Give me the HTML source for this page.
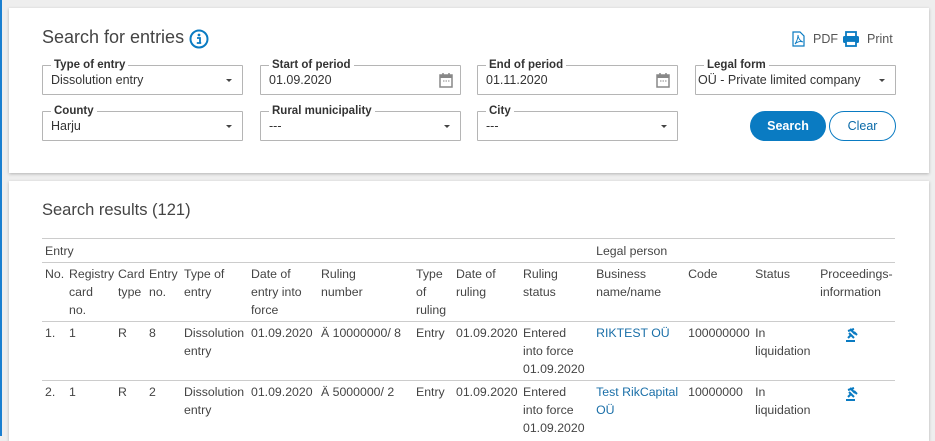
<!DOCTYPE html>
<html><head><meta charset="utf-8"><style>
*{box-sizing:border-box;margin:0;padding:0}
body{width:935px;height:436px;overflow:hidden;background:#eeeeee;font-family:"Liberation Sans",sans-serif;color:#444;position:relative}
.lb{position:absolute;left:0;top:0;width:2px;height:436px;background:#1a7fd0}
.card{position:absolute;background:#fff;box-shadow:0 1px 3px rgba(0,0,0,.25)}
.abs{position:absolute}
.f{position:absolute;height:30px;border:1px solid #b5b5b5;border-radius:1px}
.f .l{position:absolute;left:8px;top:-8px;background:#fff;padding:0 3px;font-size:11.5px;font-weight:bold;color:#333;line-height:14px}
.f .v{position:absolute;left:8px;top:7px;font-size:12.5px;color:#333}
.f .ar{position:absolute;right:10px;top:13px;border-left:3.5px solid transparent;border-right:3.5px solid transparent;border-top:3.5px solid #444}
.f .cal{position:absolute;right:7px;top:6px}
table{position:absolute;left:42px;top:238px;width:853px;border-collapse:collapse;font-size:12.3px;color:#444;table-layout:fixed}
td{vertical-align:top;line-height:18px;padding:1px 2px 1px 3px;white-space:nowrap;overflow:visible}
tr.g td{border-top:1px solid #ccc;padding-top:3px;padding-bottom:2px}
tr.h td{border-top:1px solid #ccc;padding-top:2px;padding-bottom:2px}
tr.r td{border-top:1px solid #ccc;padding-top:2px;padding-bottom:2px}
a{color:#1a6fa8;text-decoration:none}
</style></head><body>
<div class="lb"></div>
<div class="card" style="left:9px;top:8px;width:920px;height:165px"></div>
<div class="card" style="left:9px;top:181px;width:920px;height:260px"></div>

<div class="abs" style="left:42px;top:27px;font-size:18px;color:#444">Search for entries</div>
<svg class="abs" style="left:189px;top:29px" width="20" height="20" viewBox="0 0 20 20"><circle cx="10" cy="10" r="8.5" fill="none" stroke="#0a7bc2" stroke-width="2"/><circle cx="10" cy="6" r="1.4" fill="#0a7bc2"/><path d="M8 9h3v5h1.2M7.8 14h4.4" stroke="#0a7bc2" stroke-width="1.8" fill="none"/></svg>

<svg class="abs" style="left:792px;top:31px" width="13" height="16" viewBox="0 0 13 16"><path d="M1 1h7l4 4v10H1z" fill="none" stroke="#0a7bc2" stroke-width="1.2"/><path d="M3 13c2-3 3-6 3-9 0 3 2 6 5 7-3-1-6 0-8 2z" fill="none" stroke="#0a7bc2" stroke-width=".9"/></svg>
<div class="abs" style="left:813px;top:32px;font-size:12.5px;color:#555">PDF</div>
<svg class="abs" style="left:842px;top:31px" width="18" height="16" viewBox="0 0 18 16"><rect x="4" y="1" width="10" height="5" fill="none" stroke="#0a7bc2" stroke-width="1.8"/><rect x="1" y="5" width="16" height="7" rx="1.5" fill="#0a7bc2"/><rect x="4" y="10" width="10" height="5" fill="#fff" stroke="#0a7bc2" stroke-width="1.8"/></svg>
<div class="abs" style="left:867px;top:32px;font-size:12.5px;color:#555">Print</div>

<div class="f" style="left:42px;top:65px;width:201px"><span class="l">Type of entry</span><span class="v">Dissolution entry</span><span class="ar"></span></div>
<div class="f" style="left:260px;top:65px;width:201px"><span class="l">Start of period</span><span class="v">01.09.2020</span><svg class="cal" width="14" height="16" viewBox="0 0 14 16"><rect x="1" y="3" width="12" height="12" fill="none" stroke="#888" stroke-width="1.5"/><rect x="1" y="3" width="12" height="3" fill="#888"/><path d="M4 1v3M10 1v3" stroke="#888" stroke-width="1.5"/><path d="M4 9h1.5M6.5 9h1.5M9 9h1.5" stroke="#888"/></svg></div>
<div class="f" style="left:477px;top:65px;width:201px"><span class="l">End of period</span><span class="v">01.11.2020</span><svg class="cal" width="14" height="16" viewBox="0 0 14 16"><rect x="1" y="3" width="12" height="12" fill="none" stroke="#888" stroke-width="1.5"/><rect x="1" y="3" width="12" height="3" fill="#888"/><path d="M4 1v3M10 1v3" stroke="#888" stroke-width="1.5"/><path d="M4 9h1.5M6.5 9h1.5M9 9h1.5" stroke="#888"/></svg></div>
<div class="f" style="left:695px;top:65px;width:201px"><span class="l">Legal form</span><span class="v" style="left:2px">OÜ - Private limited company</span><span class="ar"></span></div>

<div class="f" style="left:42px;top:111px;width:201px"><span class="l">County</span><span class="v">Harju</span><span class="ar"></span></div>
<div class="f" style="left:260px;top:111px;width:201px"><span class="l">Rural municipality</span><span class="v">---</span><span class="ar"></span></div>
<div class="f" style="left:477px;top:111px;width:201px"><span class="l">City</span><span class="v">---</span><span class="ar"></span></div>

<div class="abs" style="left:750px;top:111px;width:76px;height:30px;border-radius:15px;background:#0a7bc2;color:#fff;font-weight:bold;font-size:12.5px;text-align:center;line-height:30px">Search</div>
<div class="abs" style="left:829px;top:111px;width:67px;height:30px;border-radius:15px;border:1px solid #0a7bc2;color:#0a6aa8;font-size:12.5px;text-align:center;line-height:28px">Clear</div>

<div class="abs" style="left:42px;top:201px;font-size:16.5px;color:#444">Search results (121)</div>

<table>
<colgroup><col style="width:24px"><col style="width:49px"><col style="width:31px"><col style="width:35px"><col style="width:67px"><col style="width:70px"><col style="width:95px"><col style="width:40px"><col style="width:67px"><col style="width:73px"><col style="width:92px"><col style="width:67px"><col style="width:65px"><col style="width:78px"></colgroup>
<tr class="g"><td colspan="10">Entry</td><td colspan="4">Legal person</td></tr>
<tr class="h"><td>No.</td><td>Registry<br>card<br>no.</td><td>Card<br>type</td><td>Entry<br>no.</td><td>Type of<br>entry</td><td>Date of<br>entry into<br>force</td><td>Ruling<br>number</td><td>Type<br>of<br>ruling</td><td>Date of<br>ruling</td><td>Ruling<br>status</td><td>Business<br>name/name</td><td>Code</td><td>Status</td><td>Proceedings-<br>information</td></tr>
<tr class="r" style="height:59px"><td>1.</td><td>1</td><td>R</td><td>8</td><td>Dissolution<br>entry</td><td>01.09.2020</td><td>Ä 10000000/ 8</td><td>Entry</td><td>01.09.2020</td><td>Entered<br>into force<br>01.09.2020</td><td><a>RIKTEST OÜ</a></td><td>100000000</td><td>In<br>liquidation</td><td style="padding-left:28px;padding-top:6px"><svg width="14" height="14" viewBox="0 0 14 14"><path d="M5 1l5 5M3 3l6-2M4 5l5 5M9 4l3 3" stroke="#0a7bc2" stroke-width="2"/><path d="M6 7l-3 3" stroke="#0a7bc2" stroke-width="2"/><path d="M1 13h9" stroke="#0a7bc2" stroke-width="2"/></svg></td></tr>
<tr class="r"><td>2.</td><td>1</td><td>R</td><td>2</td><td>Dissolution<br>entry</td><td>01.09.2020</td><td>Ä 5000000/ 2</td><td>Entry</td><td>01.09.2020</td><td>Entered<br>into force<br>01.09.2020</td><td><a>Test RikCapital<br>OÜ</a></td><td>10000000</td><td>In<br>liquidation</td><td style="padding-left:28px;padding-top:6px"><svg width="14" height="14" viewBox="0 0 14 14"><path d="M5 1l5 5M3 3l6-2M4 5l5 5M9 4l3 3" stroke="#0a7bc2" stroke-width="2"/><path d="M6 7l-3 3" stroke="#0a7bc2" stroke-width="2"/><path d="M1 13h9" stroke="#0a7bc2" stroke-width="2"/></svg></td></tr>
</table>
</body></html>
